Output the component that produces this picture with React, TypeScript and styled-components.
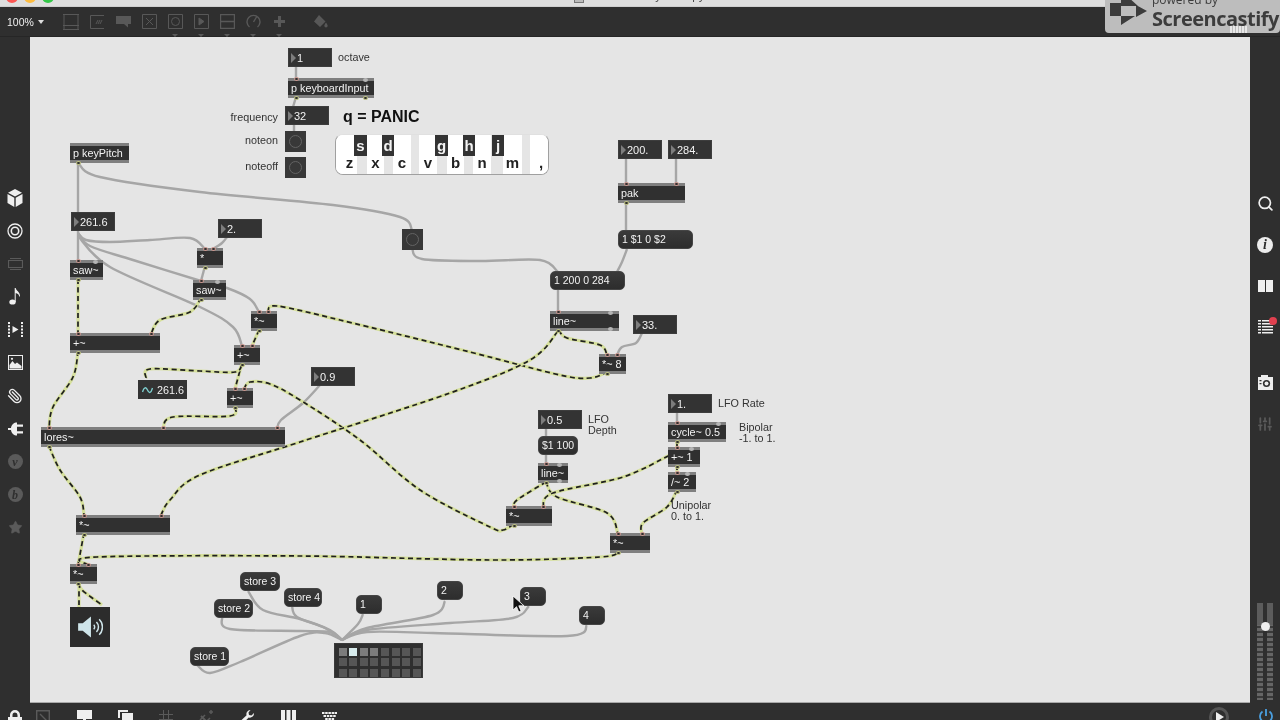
import React from 'react';
import styled, { createGlobalStyle } from 'styled-components';
import { Search, Paperclip, Star, SlidersVertical } from 'lucide-react';

const GlobalStyle = createGlobalStyle`
  html, body {
    margin: 0;
    padding: 0;
    background: #2f2f2f;
    overflow: hidden;
    font-family: "Liberation Sans", Arial, sans-serif;
  }
`;

const ORIGIN_X = 30;
const ORIGIN_Y = 37;

type Pt = [number, number];

// catmull-rom through the points, good enough for patch cords
const cord = (pts: Pt[]) => {
  let d = `M${pts[0][0]} ${pts[0][1]}`;
  for (let i = 0; i < pts.length - 1; i++) {
    const p0 = pts[i - 1] || pts[i];
    const p1 = pts[i];
    const p2 = pts[i + 1];
    const p3 = pts[i + 2] || p2;
    const c1x = p1[0] + (p2[0] - p0[0]) / 6;
    const c1y = p1[1] + (p2[1] - p0[1]) / 6;
    const c2x = p2[0] - (p3[0] - p1[0]) / 6;
    const c2y = p2[1] - (p3[1] - p1[1]) / 6;
    d += ` C${c1x} ${c1y} ${c2x} ${c2y} ${p2[0]} ${p2[1]}`;
  }
  return d;
};

const grayCords: Pt[][] = [
  [[296, 66], [296, 79]],
  [[296, 97], [293, 107]],
  [[294, 124], [294, 132]],
  [[78, 162], [78, 213]],
  [[78, 163], [100, 177], [200, 192], [333, 205], [400, 217], [412, 230]],
  [[412, 248], [422, 259], [480, 261], [540, 260], [558, 272]],
  [[78, 231], [78, 262]],
  [[78, 233], [86, 240], [110, 242], [150, 240], [190, 238], [205, 249]],
  [[78, 233], [90, 246], [133, 260], [201, 281], [227, 288], [250, 299], [259, 312]],
  [[78, 236], [110, 267], [200, 307], [233, 327], [242, 346]],
  [[227, 237], [222, 243], [213, 249]],
  [[205, 266], [201, 281]],
  [[320, 385], [303, 403], [281, 420], [277, 429]],
  [[626, 158], [626, 184]],
  [[676, 158], [676, 184]],
  [[626, 201], [626, 231]],
  [[627, 249], [622, 262], [617, 272]],
  [[558, 289], [558, 312]],
  [[642, 333], [636, 343], [622, 347], [617, 355]],
  [[546, 428], [546, 437]],
  [[546, 454], [546, 464]],
  [[677, 412], [677, 423]],
  [[197, 665], [210, 673], [240, 662], [300, 636], [325, 633], [342, 640]],
  [[222, 617], [230, 629], [300, 631], [330, 632], [342, 640]],
  [[248, 591], [263, 610], [300, 619], [330, 630], [342, 640]],
  [[292, 606], [297, 617], [325, 628], [342, 640]],
  [[363, 614], [358, 624], [342, 640]],
  [[445, 601], [433, 615], [367, 628], [342, 640]],
  [[529, 606], [513, 618], [450, 623], [367, 630], [342, 640]],
  [[587, 625], [567, 636], [433, 633], [367, 632], [342, 640]],
];

const signalCords: Pt[][] = [
  [[78, 279], [78, 333]],
  [[201, 298], [190, 312], [160, 320], [151, 334]],
  [[78, 351], [73, 377], [53, 407], [49, 428]],
  [[268, 312], [277, 306], [340, 320], [470, 352], [560, 375], [590, 378], [607, 372]],
  [[259, 330], [252, 346]],
  [[242, 363], [235, 389]],
  [[146, 378], [150, 369], [200, 371], [235, 372], [242, 364]],
  [[244, 389], [250, 382], [270, 384], [300, 400], [360, 440], [420, 490], [490, 527], [503, 530], [514, 524]],
  [[235, 407], [230, 416], [173, 417], [163, 428]],
  [[49, 446], [60, 470], [80, 497], [84, 515]],
  [[161, 515], [170, 500], [200, 475], [300, 442], [450, 393], [530, 360], [558, 331]],
  [[84, 533], [78, 565]],
  [[88, 565], [97, 557], [300, 556], [490, 560], [600, 557], [618, 552]],
  [[79, 583], [79, 607]],
  [[79, 583], [82, 590], [102, 605]],
  [[559, 330], [567, 338], [600, 345], [607, 355]],
  [[546, 482], [517, 500], [514, 507]],
  [[546, 482], [557, 497], [607, 513], [618, 534]],
  [[543, 507], [553, 493], [623, 477], [670, 455]],
  [[677, 441], [677, 447]],
  [[677, 465], [677, 472]],
  [[677, 490], [667, 507], [643, 523], [642, 534]],
];

type ObjData = {
  t: string;
  x: number;
  y: number;
  w: number;
  ins?: number[];
  outs?: number[];
  ghostTop?: number;
  ghostBottom?: number;
};

const objects: ObjData[] = [
  { t: 'p keyboardInput', x: 288, y: 78, w: 86, ins: [8], outs: [8, 77], ghostTop: 77 },
  { t: 'p keyPitch', x: 70, y: 143, w: 59, outs: [8] },
  { t: 'saw~', x: 70, y: 260, w: 33, ins: [8], outs: [8], ghostTop: 25 },
  { t: '*', x: 197, y: 248, w: 26, ins: [8, 16], outs: [8] },
  { t: 'saw~', x: 193, y: 280, w: 33, ins: [8], outs: [8], ghostTop: 24 },
  { t: '*~', x: 251, y: 311, w: 26, ins: [8, 17], outs: [8] },
  { t: '+~', x: 70, y: 333, w: 90, ins: [8, 81], outs: [8] },
  { t: '+~', x: 234, y: 345, w: 26, ins: [8, 18], outs: [8] },
  { t: '+~', x: 227, y: 388, w: 26, ins: [8, 17], outs: [8] },
  { t: 'lores~', x: 41, y: 427, w: 244, ins: [8, 122, 236], outs: [8] },
  { t: '*~', x: 76, y: 515, w: 94, ins: [8, 85], outs: [8] },
  { t: '*~', x: 70, y: 564, w: 27, ins: [8, 18], outs: [8] },
  { t: 'pak', x: 618, y: 183, w: 67, ins: [8, 58], outs: [8] },
  { t: 'line~', x: 550, y: 311, w: 69, ins: [8], outs: [8], ghostTop: 60, ghostBottom: 60 },
  { t: '*~ 8', x: 599, y: 354, w: 27, ins: [8, 18], outs: [8] },
  { t: 'line~', x: 538, y: 463, w: 30, ins: [8], outs: [8], ghostTop: 21, ghostBottom: 21 },
  { t: '*~', x: 506, y: 506, w: 46, ins: [8, 37], outs: [8] },
  { t: '*~', x: 610, y: 533, w: 40, ins: [8, 32], outs: [8] },
  { t: 'cycle~ 0.5', x: 668, y: 422, w: 58, ins: [9], outs: [9], ghostTop: 50 },
  { t: '+~ 1', x: 668, y: 447, w: 32, ins: [9], outs: [9], ghostTop: 23 },
  { t: '/~ 2', x: 668, y: 472, w: 28, ins: [9], outs: [9], ghostTop: 19 },
];

const numbers = [
  { t: '1', x: 288, y: 48 },
  { t: '32', x: 285, y: 106 },
  { t: '261.6', x: 71, y: 212 },
  { t: '2.', x: 218, y: 219 },
  { t: '0.9', x: 311, y: 367 },
  { t: '200.', x: 618, y: 140 },
  { t: '284.', x: 668, y: 140 },
  { t: '33.', x: 633, y: 315 },
  { t: '0.5', x: 538, y: 410 },
  { t: '1.', x: 668, y: 394 },
];

const messages = [
  { t: '1 $1 0 $2', x: 618, y: 230, w: 75 },
  { t: '1 200 0 284', x: 550, y: 271, w: 75 },
  { t: '$1 100', x: 538, y: 436, w: 40 },
  { t: 'store 3', x: 240, y: 572, w: 40 },
  { t: 'store 2', x: 214, y: 599, w: 39 },
  { t: 'store 4', x: 284, y: 588, w: 38 },
  { t: 'store 1', x: 190, y: 647, w: 39 },
  { t: '1', x: 356, y: 595, w: 26 },
  { t: '2', x: 437, y: 581, w: 26 },
  { t: '3', x: 520, y: 587, w: 26 },
  { t: '4', x: 579, y: 606, w: 26 },
];

const bangs = [
  { x: 285, y: 131 },
  { x: 285, y: 157 },
  { x: 402, y: 229 },
];

const labels = [
  { t: 'octave', x: 338, y: 52 },
  { t: 'LFO Rate', x: 718, y: 398 },
  { t: 'LFO\nDepth', x: 588, y: 414 },
  { t: 'Bipolar\n-1. to 1.', x: 739, y: 422 },
  { t: 'Unipolar\n0. to 1.', x: 671, y: 500 },
];

const rightLabels = [
  { t: 'frequency', x: 278, y: 110 },
  { t: 'noteon', x: 278, y: 133 },
  { t: 'noteoff', x: 278, y: 159 },
];

const keyboardCells = [
  { white: 'z', w: 21, nudge: 6 },
  { w: 10, cap: 's', off: -3, cw: 13 },
  { white: 'x', w: 17 },
  { w: 9, cap: 'd', off: -2, cw: 12 },
  { white: 'c', w: 18 },
  { w: 8 },
  { white: 'v', w: 18 },
  { w: 10, cap: 'g', off: -2, cw: 13 },
  { white: 'b', w: 17 },
  { w: 9, cap: 'h', off: -1, cw: 12 },
  { white: 'n', w: 18 },
  { w: 12, cap: 'j', off: 1, cw: 12 },
  { white: 'm', w: 19 },
  { w: 8 },
  { white: ',', w: 18, nudge: 4 },
];

const leds = Array.from({ length: 24 }, (_, i) => (i === 1 ? 2 : i < 4 ? 1 : 0));

const App = () => (
  <>
    <GlobalStyle />
    <Window>
      <TitleBar>
        <Lights>
          <Light $c="#fc5753" />
          <Light $c="#fdbc40" />
          <Light $c="#33c748" />
        </Lights>
        <WindowTitle>
          <DocIcon />
          subtractiveSynth copy
        </WindowTitle>
      </TitleBar>
      <Toolbar>
        <Zoom>
          100% <ZoomCaret />
        </Zoom>
        <ToolGroup>
          <Tool>
            <svg width="16" height="16" viewBox="0 0 16 16" fill="none" stroke="currentColor">
              <path d="M0 .5h16M0 15.5h16M0 11.5h16M1 .5v15M15 .5v15" />
            </svg>
          </Tool>
          <Tool>
            <svg width="15" height="14" viewBox="0 0 15 14" fill="none" stroke="currentColor">
              <path d="M14 .5H.5v13H14M6 9l2-4M8 9l2-4M10 9l2-4" />
            </svg>
          </Tool>
          <Tool>
            <svg width="15" height="13" viewBox="0 0 15 13" fill="currentColor">
              <path d="M0 1h15v8h-3v3.500L8 9H0z" />
            </svg>
          </Tool>
          <Tool>
            <svg width="15" height="15" viewBox="0 0 15 15" fill="none" stroke="currentColor">
              <path d="M.5.5h14v14H.5zM4 4l7 7M11 4l-7 7" />
            </svg>
          </Tool>
          <Tool $caret>
            <svg width="15" height="15" viewBox="0 0 15 15" fill="none" stroke="currentColor">
              <path d="M.5.5h14v14H.5z" />
              <circle cx="7.500" cy="7.500" r="4" />
            </svg>
          </Tool>
          <Tool $caret>
            <svg width="15" height="15" viewBox="0 0 15 15" fill="none" stroke="currentColor">
              <path d="M.5.5h14v14H.5z" />
              <path d="M5 4l5 3.500L5 11z" fill="currentColor" />
            </svg>
          </Tool>
          <Tool $caret>
            <svg width="15" height="15" viewBox="0 0 15 15" fill="none" stroke="currentColor">
              <path d="M.5.5h14v14H.5zM.5 7.500h14" strokeWidth="1.400" />
            </svg>
          </Tool>
          <Tool $caret>
            <svg width="15" height="15" viewBox="0 0 15 15" fill="none" stroke="currentColor" strokeWidth="1.400">
              <path d="M3.500 13a6.500 6.500 0 1 1 8 0M7.500 8l3-5" />
            </svg>
          </Tool>
          <Tool $caret>
            <svg width="11" height="11" viewBox="0 0 11 11" fill="currentColor">
              <path d="M4 0h3v4h4v3H7v4H4V7H0V4h4z" />
            </svg>
          </Tool>
          <BucketTool>
            <svg width="15" height="13" viewBox="0 0 15 13" fill="currentColor">
              <path d="M6 0l6.500 6.500L7 12 1 6.500zM13 7.500c1 1.500 1.700 2.500 1.700 3.300a1.700 1.700 0 0 1-3.400 0c0-.8.7-1.800 1.700-3.300z" />
            </svg>
          </BucketTool>
        </ToolGroup>
      </Toolbar>

      <Middle>
        <LeftRail>
          <RailIcon>
            <svg width="16" height="18" viewBox="0 0 16 18" fill="currentColor">
              <path d="M8 0l7 3.700L8 7.500 1 3.700zM.5 5l6.800 3.700V18L.5 14zM15.500 5L8.700 8.700V18l6.800-4z" />
            </svg>
          </RailIcon>
          <RailIcon>
            <svg width="16" height="16" viewBox="0 0 16 16" fill="none" stroke="currentColor" strokeWidth="1.300">
              <circle cx="8" cy="8" r="7" />
              <circle cx="8" cy="8" r="3.700" strokeWidth="1.600" />
            </svg>
          </RailIcon>
          <RailIcon $dim>
            <svg width="15" height="12" viewBox="0 0 15 12" fill="none" stroke="currentColor">
              <path d="M.5 2.500h14v7H.5zM2 .5h11M2 11.500h11" strokeWidth="1.200" />
            </svg>
          </RailIcon>
          <RailIcon>
            <svg width="12" height="17" viewBox="0 0 12 17" fill="currentColor">
              <ellipse cx="3.500" cy="14" rx="3.200" ry="2.600" />
              <path d="M5.700 14V0h1c.5 3 4.500 3.600 4.300 8.500h-.8C10 6 8.300 5.500 6.700 5v9z" />
            </svg>
          </RailIcon>
          <RailIcon>
            <svg width="15" height="15" viewBox="0 0 15 15" fill="currentColor">
              <path d="M0 0h2v2H0zM0 3.200h2v2H0zM0 6.500h2v2H0zM0 9.800h2v2H0zM0 13h2v2H0zM13 0h2v2h-2zM13 3.200h2v2h-2zM13 6.500h2v2h-2zM13 9.800h2v2h-2zM13 13h2v2h-2zM4.500 4l6 3.500-6 3.500z" />
            </svg>
          </RailIcon>
          <RailIcon>
            <svg width="15" height="15" viewBox="0 0 15 15">
              <path d="M0 0h15v15H0z" fill="#ededed" />
              <path d="M1 1h13v13H1z" fill="#2f2f2f" />
              <path d="M1.500 13.500V10l3-4 2.500 3 2-1.500 4.500 3.500v2.500z" fill="#ededed" />
              <circle cx="4" cy="3.800" r="1.100" fill="#ededed" />
            </svg>
          </RailIcon>
          <RailIcon>
            <FlippedClip size={16} strokeWidth={2} />
          </RailIcon>
          <RailIcon>
            <svg width="15" height="14" viewBox="0 0 15 14" fill="currentColor">
              <path d="M0 6h3c.4-3.500 3-5.500 6-5.500V13.500C6 13.500 3.400 11.500 3 8H0zM9 2.500h6v2.300H9zM9 9.200h6v2.300H9z" />
            </svg>
          </RailIcon>
          <RailIcon $dim>
            <LetterDisc>v</LetterDisc>
          </RailIcon>
          <RailIcon $dim>
            <LetterDisc>b</LetterDisc>
          </RailIcon>
          <RailIcon $dim>
            <Star size={15} fill="currentColor" strokeWidth={1} />
          </RailIcon>
        </LeftRail>

        <Canvas>
          <WireLayer viewBox={`${ORIGIN_X} ${ORIGIN_Y} 1220 666`}>
            {grayCords.map((pts, i) => (
              <path key={i} d={cord(pts)} fill="none" stroke="#a6a6a6" strokeWidth="2.400" />
            ))}
            {signalCords.map((pts, i) => (
              <g key={i} fill="none">
                <path d={cord(pts)} stroke="#d6e09c" strokeWidth="3.200" />
                <path d={cord(pts)} stroke="#1f1f1f" strokeWidth="1.700" strokeDasharray="5 3.500" />
              </g>
            ))}
          </WireLayer>

          {numbers.map((n) => (
            <NumberBox key={n.t + n.x} $x={n.x} $y={n.y}>
              <NumberArrow />
              {n.t}
            </NumberBox>
          ))}

          {objects.map((o) => (
            <ObjectBox key={o.t + o.x} $x={o.x} $y={o.y} $w={o.w}>
              {o.t}
              {o.ins?.map((p) => <Inlet key={p} $at={p} />)}
              {o.outs?.map((p) => <Outlet key={p} $at={p} />)}
              {o.ghostTop !== undefined && <GhostPort $at={o.ghostTop} />}
              {o.ghostBottom !== undefined && <GhostPort $at={o.ghostBottom} $bottom />}
            </ObjectBox>
          ))}

          {messages.map((m) => (
            <MessageBox key={m.t + m.x} $x={m.x} $y={m.y} $w={m.w}>
              {m.t}
            </MessageBox>
          ))}

          {bangs.map((b) => (
            <BangBox key={b.x + b.y} $x={b.x} $y={b.y}>
              <BangRing />
            </BangBox>
          ))}

          {labels.map((l) => (
            <Label key={l.t} $x={l.x} $y={l.y}>
              {l.t}
            </Label>
          ))}
          {rightLabels.map((l) => (
            <RightLabel key={l.t} $x={l.x} $y={l.y}>
              {l.t}
            </RightLabel>
          ))}

          <ScopeBox>
            <svg width="11" height="8" viewBox="0 0 11 8" fill="none" stroke="#7fd0d0" strokeWidth="1.400">
              <path d="M.5 6C2 1 4 .5 5.500 4S9 7.500 10.500 2" />
            </svg>
            261.6
          </ScopeBox>

          <Panic>q = PANIC</Panic>

          <Keyboard>
            {keyboardCells.map((c, i) =>
              c.white ? (
                <WhiteKey key={i} $w={c.w} $nudge={c.nudge ?? 0}>
                  {c.white}
                </WhiteKey>
              ) : (
                <KeyGap key={i} $w={c.w}>
                  {c.cap && (
                    <BlackKey $off={c.off as number} $w={c.cw as number}>
                      {c.cap}
                    </BlackKey>
                  )}
                </KeyGap>
              ),
            )}
          </Keyboard>

          <Speaker>
            <svg width="25" height="22" viewBox="0 0 27 24" fill="none" stroke="#cfe5ea" strokeWidth="1.600">
              <path d="M0 8h5l9-7.500v23L5 16H0z" fill="#cfe5ea" stroke="none" />
              <path d="M17 9.500a3.500 3.500 0 0 1 0 5M20 6.500a8 8 0 0 1 0 11M23 3.500a12 12 0 0 1 0 17" />
            </svg>
          </Speaker>

          <Matrix>
            {leds.map((level, i) => (
              <Led key={i} $level={level} />
            ))}
          </Matrix>

          <Pointer width="14" height="19" viewBox="0 0 14 19">
            <path d="M1 1v14l3.500-3.300 2.300 5.300 2.300-1-2.300-5.200H12z" fill="#111" stroke="#fff" strokeWidth=".8" />
          </Pointer>
        </Canvas>

        <RightRail>
          <RightIcon>
            <Search size={17} strokeWidth={2.400} />
          </RightIcon>
          <RightIcon>
            <InfoDisc>i</InfoDisc>
          </RightIcon>
          <RightIcon>
            <svg width="15" height="12" viewBox="0 0 15 12" fill="currentColor">
              <path d="M0 0h7v12H0zM8 0h7v12H8z" />
            </svg>
          </RightIcon>
          <RightIcon>
            <svg width="15" height="14" viewBox="0 0 15 14" fill="currentColor">
              <path d="M0 0h3v1.500H0zM4 0h11v1.500H4zM0 3h3v1.500H0zM4 3h11v1.500H4zM0 6h3v1.500H0zM4 6h11v1.500H4zM0 9h3v1.500H0zM4 9h11v1.500H4zM0 12h3v1.500H0zM4 12h11v1.500H4z" />
            </svg>
            <RedDot />
          </RightIcon>
          <CameraIcon>
            <svg width="15" height="15" viewBox="0 0 15 15">
              <path d="M3 0h7v2h5v13H0V2h3z" fill="#ededed" />
              <circle cx="8.500" cy="8.500" r="3.600" fill="#2f2f2f" />
              <circle cx="8.500" cy="8.500" r="2" fill="#ededed" />
              <path d="M1.500 5h2v1.200h-2zM1.500 8h2v1.200h-2z" fill="#2f2f2f" />
            </svg>
          </CameraIcon>
          <RightIcon $dim>
            <SlidersVertical size={16} strokeWidth={2.600} />
          </RightIcon>
          <Meter>
            <MeterColumn />
            <MeterColumn />
            <MeterKnob />
          </Meter>
        </RightRail>
      </Middle>

      <BottomBar>
        <BottomGroup>
          <BottomIcon $at={8}>
            <svg width="14" height="16" viewBox="0 0 14 16" fill="currentColor">
              <path d="M2 7V5a5 5 0 0 1 10 0v2h2v9H0V7zm2.500 0h5V5a2.500 2.500 0 0 0-5 0z" />
            </svg>
          </BottomIcon>
          <BottomIcon $at={36} $dim>
            <svg width="14" height="14" viewBox="0 0 14 14" fill="none" stroke="currentColor" strokeWidth="1.400">
              <path d="M.7.7h12.600v12.600H.7zM4 4l7 7" />
            </svg>
          </BottomIcon>
          <BottomIcon $at={77}>
            <svg width="15" height="14" viewBox="0 0 15 14" fill="currentColor">
              <path d="M0 0h15v9H9v3H6V9H0z" />
            </svg>
          </BottomIcon>
          <BottomIcon $at={118}>
            <svg width="15" height="14" viewBox="0 0 15 14" fill="currentColor">
              <path d="M0 0h10v2H2v6H0zM4 3h11v11H4z" />
            </svg>
          </BottomIcon>
          <BottomIcon $at={159} $dim>
            <svg width="14" height="14" viewBox="0 0 14 14" fill="none" stroke="currentColor" strokeWidth="1">
              <path d="M4.500 0v14M9.500 0v14M0 4.500h14M0 9.500h14" />
            </svg>
          </BottomIcon>
          <BottomIcon $at={199} $dim>
            <svg width="15" height="14" viewBox="0 0 15 14" fill="none" stroke="currentColor" strokeWidth="2">
              <path d="M1 10l5-5M6 13l5-5M12 0v4M10 2h4" strokeWidth="1.500" />
              <path d="M2 6l6 6" />
            </svg>
          </BottomIcon>
          <BottomIcon $at={240}>
            <svg width="14" height="14" viewBox="0 0 14 14" fill="currentColor">
              <path d="M14 3.500a4 4 0 0 1-5.300 3.900L3 13.500 0 14l.5-3L6.600 5.300A4 4 0 0 1 10.500 0L8.500 2.500l.5 2.500 2.500.5L14 3z" />
            </svg>
          </BottomIcon>
          <BottomIcon $at={281}>
            <svg width="15" height="14" viewBox="0 0 15 14" fill="currentColor">
              <path d="M0 0h4v14H0zM5.500 0h4v14h-4zM11 0h4v14h-4z" />
            </svg>
          </BottomIcon>
          <BottomIcon $at={322}>
            <svg width="15" height="12" viewBox="0 0 15 12" fill="currentColor">
              <path d="M0 0h2.500v2H0zM3.200 0h2.500v2H3.200zM6.400 0h2.500v2H6.400zM9.600 0h2.500v2H9.600zM12.600 0H15v2h-2.400zM1.500 3h2.500v2H1.500zM4.800 3h2.500v2H4.800zM8 3h2.500v2H8zM11.200 3h2.500v2h-2.500zM3.200 6h2.500v2H3.200zM6.400 6h2.500v2H6.400zM9.600 6h2.500v2H9.600z" />
            </svg>
          </BottomIcon>
        </BottomGroup>
        <BottomEnd>
          <PlayDisc>
            <svg width="9" height="10" viewBox="0 0 9 10" fill="#eee">
              <path d="M1 0l8 5-8 5z" />
            </svg>
          </PlayDisc>
          <PowerIcon>
            <svg width="14" height="14" viewBox="0 0 14 14" fill="none" stroke="#4a9fe0" strokeWidth="1.800">
              <path d="M7 0v7M3.500 2.500a6 6 0 1 0 7 0" />
            </svg>
          </PowerIcon>
        </BottomEnd>
      </BottomBar>

      <Badge>
        <svg width="38" height="26" viewBox="0 0 38 26" fill="#3c3c3c">
          <path d="M0 3h11v13H0zM11 -4h6l11 10H11zM26 5l11 6-11 6zM11 16h14l-14 9z" />
        </svg>
        <BadgeText>
          <Powered>powered by</Powered>
          <Brand>Screencastify</Brand>
        </BadgeText>
        <BadgeSpeck />
      </Badge>
    </Window>
  </>
);

export default App;

const Window = styled.div`
  position: relative;
  display: flex;
  flex-direction: column;
  width: 1280px;
  height: 720px;
  overflow: hidden;
  background: #2f2f2f;
  filter: blur(0.45px);
`;

const TitleBar = styled.div`
  position: relative;
  height: 7px;
  flex: none;
  overflow: hidden;
  background: #dedede;
  border-bottom: 1px solid #cfcfcf;
  box-sizing: border-box;
`;

const Lights = styled.div`
  display: flex;
  gap: 6px;
  margin: -9px 0 0 6px;
`;

const Light = styled.span<{ $c: string }>`
  width: 12px;
  height: 12px;
  border-radius: 50%;
  background: ${(p) => p.$c};
`;

const WindowTitle = styled.div`
  position: absolute;
  left: 574px;
  top: -11px;
  display: flex;
  align-items: center;
  gap: 8px;
  font-size: 11.500px;
  line-height: 14px;
  color: #444;
  white-space: nowrap;
`;

const DocIcon = styled.span`
  width: 8px;
  height: 11px;
  background: #bbb;
  border: 1px solid #777;
`;

const Toolbar = styled.div`
  display: flex;
  align-items: center;
  flex: none;
  height: 30px;
  box-sizing: border-box;
  padding-left: 7px;
  background: #2f2f2f;
  border-bottom: 1px solid #262626;
`;

const Zoom = styled.div`
  display: flex;
  align-items: center;
  gap: 4px;
  width: 51px;
  font-size: 10.5px;
  color: #f0f0f0;
`;

const ZoomCaret = styled.span`
  width: 0;
  height: 0;
  border-left: 3px solid transparent;
  border-right: 3px solid transparent;
  border-top: 4px solid #ddd;
`;

const ToolGroup = styled.div`
  display: flex;
  align-items: center;
  color: #585858;
`;

const Tool = styled.div<{ $caret?: boolean }>`
  position: relative;
  display: flex;
  align-items: center;
  justify-content: center;
  width: 26px;
  height: 22px;

  ${(p) =>
    p.$caret &&
    `&::after {
      content: '';
      position: absolute;
      left: 10px;
      bottom: -4px;
      border-left: 3px solid transparent;
      border-right: 3px solid transparent;
      border-top: 3px solid #585858;
    }`}
`;

const BucketTool = styled(Tool)`
  margin-left: 15px;
`;

const Middle = styled.div`
  display: flex;
  flex: 1;
  min-height: 0;
`;

const LeftRail = styled.div`
  display: flex;
  flex-direction: column;
  flex: none;
  box-sizing: border-box;
  width: 30px;
  padding-top: 144px;
`;

const RailIcon = styled.div<{ $dim?: boolean }>`
  display: flex;
  align-items: center;
  justify-content: center;
  height: 33px;
  color: ${(p) => (p.$dim ? '#5a5a5a' : '#efefef')};
`;

const FlippedClip = styled(Paperclip)`
  transform: scaleX(-1);
`;

const LetterDisc = styled.span`
  display: flex;
  align-items: center;
  justify-content: center;
  width: 15px;
  height: 15px;
  border-radius: 50%;
  background: #5a5a5a;
  color: #2f2f2f;
  font: italic bold 12px/1 "Liberation Serif", serif;
`;

const Canvas = styled.div`
  position: relative;
  flex: 1;
  box-sizing: border-box;
  background: #e5e5e5;
  border-bottom: 1px solid #a9a9a9;
  color: #333;
  font-size: 10.800px;
`;

const WireLayer = styled.svg`
  position: absolute;
  inset: 0;
  width: 1220px;
  height: 666px;
`;

const Placed = styled.div<{ $x: number; $y: number }>`
  position: absolute;
  left: ${(p) => p.$x - ORIGIN_X}px;
  top: ${(p) => p.$y - ORIGIN_Y}px;
`;

const NumberBox = styled(Placed)`
  display: flex;
  align-items: center;
  box-sizing: border-box;
  width: 44px;
  height: 19px;
  padding-left: 2px;
  background: #333;
  border: 1px solid #3d3d3d;
  color: #f2f2f2;
  font-size: 11px;
`;

const NumberArrow = styled.span`
  width: 0;
  height: 0;
  margin-right: 1px;
  border-top: 5px solid transparent;
  border-bottom: 5px solid transparent;
  border-left: 5px solid #7d7d7d;
`;

const ObjectBox = styled(Placed)<{ $w: number }>`
  box-sizing: border-box;
  width: ${(p) => p.$w}px;
  height: 20px;
  padding-left: 3px;
  background: #303030;
  border-top: 3px solid #7f7f7f;
  border-bottom: 3px solid #7f7f7f;
  color: #f2f2f2;
  line-height: 14px;
  white-space: nowrap;
`;

const Port = styled.span<{ $at: number }>`
  position: absolute;
  left: ${(p) => p.$at - 2.5}px;
  width: 5px;
  height: 4px;
  box-sizing: border-box;
  border-radius: 50%;
  background: #2a2a2a;
`;

const Inlet = styled(Port)`
  top: -4.500px;
  border: 1px solid #cf9a92;
`;

const Outlet = styled(Port)`
  bottom: -4.500px;
  border: 1px solid #c2c685;
`;

const GhostPort = styled(Port)<{ $bottom?: boolean }>`
  ${(p) => (p.$bottom ? 'bottom: -3px;' : 'top: -3px;')}
  background: #b5b5b5;
`;

const MessageBox = styled(Placed)<{ $w: number }>`
  box-sizing: border-box;
  width: ${(p) => p.$w}px;
  height: 19px;
  padding-left: 3px;
  border-radius: 5px;
  background: linear-gradient(#3a3a3a, #2d2d2d);
  border: 1px solid #454545;
  color: #f2f2f2;
  font-size: 10.500px;
  line-height: 17px;
  white-space: nowrap;
`;

const BangBox = styled(Placed)`
  display: flex;
  align-items: center;
  justify-content: center;
  width: 21px;
  height: 21px;
  background: #383838;
`;

const BangRing = styled.span`
  width: 11px;
  height: 11px;
  border: 1.500px solid #636363;
  border-radius: 50%;
`;

const Label = styled(Placed)`
  line-height: 11px;
  white-space: pre;
`;

const RightLabel = styled.div<{ $x: number; $y: number }>`
  position: absolute;
  right: ${(p) => 1250 - p.$x}px;
  top: ${(p) => p.$y - ORIGIN_Y}px;
  line-height: 14px;
`;

const ScopeBox = styled.div`
  position: absolute;
  left: 108px;
  top: 343px;
  display: flex;
  align-items: center;
  gap: 4px;
  box-sizing: border-box;
  width: 49px;
  height: 19px;
  padding-left: 4px;
  background: #333;
  color: #f2f2f2;
`;

const Panic = styled.div`
  position: absolute;
  left: 313px;
  top: 71px;
  font-size: 16px;
  font-weight: bold;
  line-height: 18px;
  color: #111;
`;

const Keyboard = styled.div`
  position: absolute;
  left: 305px;
  top: 97px;
  display: flex;
  box-sizing: border-box;
  width: 214px;
  height: 41px;
  overflow: hidden;
  border: 1px solid #a0a0a0;
  border-top-color: #e0e0e0;
  border-radius: 8px;
  background: #fff;
`;

const WhiteKey = styled.div<{ $w: number; $nudge: number }>`
  display: flex;
  flex: none;
  align-items: flex-end;
  justify-content: center;
  width: ${(p) => p.$w}px;
  padding-bottom: 3px;
  padding-left: ${(p) => p.$nudge}px;
  box-sizing: border-box;
  background: #fff;
  font-size: 15px;
  font-weight: bold;
  line-height: 16px;
  color: #222;
`;

const KeyGap = styled.div<{ $w: number }>`
  position: relative;
  flex: none;
  width: ${(p) => p.$w}px;
  background: #e5e5e5;
`;

const BlackKey = styled.div<{ $off: number; $w: number }>`
  position: absolute;
  top: 0;
  left: ${(p) => p.$off}px;
  width: ${(p) => p.$w}px;
  height: 21px;
  background: #333;
  color: #f4f4f4;
  font-size: 15px;
  font-weight: bold;
  line-height: 21px;
  text-align: center;
`;

const Speaker = styled.div`
  position: absolute;
  left: 40px;
  top: 570px;
  display: flex;
  align-items: center;
  justify-content: center;
  width: 40px;
  height: 40px;
  background: #2c2c2c;
`;

const Matrix = styled.div`
  position: absolute;
  left: 304px;
  top: 606px;
  display: grid;
  grid-template-columns: repeat(8, 8px);
  grid-auto-rows: 8px;
  gap: 2.670px;
  box-sizing: border-box;
  width: 89px;
  height: 35px;
  padding: 3.500px;
  background: #2f2f2f;
  border: 1px solid #3a3a3a;
`;

const Led = styled.span<{ $level: number }>`
  background: ${(p) => ['#565656', '#7c7c7c', '#d7ebec'][p.$level]};
`;

const Pointer = styled.svg`
  position: absolute;
  left: 482px;
  top: 558px;
`;

const RightRail = styled.div`
  display: flex;
  flex-direction: column;
  flex: none;
  box-sizing: border-box;
  width: 30px;
  padding-top: 146px;
`;

const RightIcon = styled.div<{ $dim?: boolean }>`
  position: relative;
  display: flex;
  align-items: center;
  justify-content: center;
  height: 41px;
  color: ${(p) => (p.$dim ? '#5a5a5a' : '#efefef')};
`;

const CameraIcon = styled(RightIcon)`
  margin-top: 15px;
`;

const InfoDisc = styled.span`
  display: flex;
  align-items: center;
  justify-content: center;
  width: 16px;
  height: 16px;
  border-radius: 50%;
  background: #ededed;
  color: #2f2f2f;
  font: italic bold 14px/1 "Liberation Serif", serif;
`;

const RedDot = styled.span`
  position: absolute;
  right: 3px;
  top: 11px;
  width: 8px;
  height: 8px;
  border-radius: 50%;
  background: #e0404f;
`;

const Meter = styled.div`
  position: relative;
  display: flex;
  justify-content: center;
  gap: 4px;
  height: 97px;
  margin-top: auto;
  margin-bottom: 3px;
`;

const MeterColumn = styled.div`
  width: 6px;
  background:
    linear-gradient(#5c5c5c, #5c5c5c) top / 100% 22px no-repeat,
    repeating-linear-gradient(#666 0 3px, #3a3a3a 3px 5px);
`;

const MeterKnob = styled.span`
  position: absolute;
  left: 10.500px;
  top: 19px;
  width: 9px;
  height: 9px;
  border-radius: 50%;
  background: #efefef;
`;

const BottomBar = styled.div`
  position: relative;
  flex: none;
  height: 17px;
  overflow: hidden;
  background: #2f2f2f;
`;

const BottomGroup = styled.div`
  display: contents;
`;

const BottomIcon = styled.div<{ $at: number; $dim?: boolean }>`
  position: absolute;
  top: 7px;
  left: ${(p) => p.$at}px;
  color: ${(p) => (p.$dim ? '#5a5a5a' : '#efefef')};
`;

const BottomEnd = styled.div`
  position: absolute;
  left: 1209px;
  top: 4px;
  display: flex;
  gap: 30px;
`;

const PlayDisc = styled.div`
  display: flex;
  align-items: center;
  justify-content: center;
  width: 20px;
  height: 20px;
  box-sizing: border-box;
  border: 3px solid #555;
  border-radius: 50%;
`;

const PowerIcon = styled.div`
  margin-top: 2px;
`;

const Badge = styled.div`
  position: absolute;
  right: 0;
  top: 0;
  display: flex;
  gap: 3px;
  box-sizing: border-box;
  width: 175px;
  height: 33px;
  padding: 0 0 0 5px;
  overflow: hidden;
  border-radius: 0 0 4px 4px;
  background: #bdbdbd;
  color: #3c3c3c;
`;

const BadgeText = styled.div`
  display: flex;
  flex-direction: column;
  margin-top: -7px;
  margin-left: 1px;
`;

const Powered = styled.span`
  font-family: "Open Sans", sans-serif;
  font-size: 12px;
  line-height: 14px;
`;

const Brand = styled.span`
  font-family: "Open Sans", sans-serif;
  font-size: 20px;
  font-weight: 700;
  letter-spacing: -0.5px;
  line-height: 24px;
`;

const BadgeSpeck = styled.span`
  position: absolute;
  left: 125px;
  top: 26px;
  width: 17px;
  height: 7px;
  background: repeating-linear-gradient(90deg, #e8e8e8 0 2px, transparent 2px 3px);
`;
